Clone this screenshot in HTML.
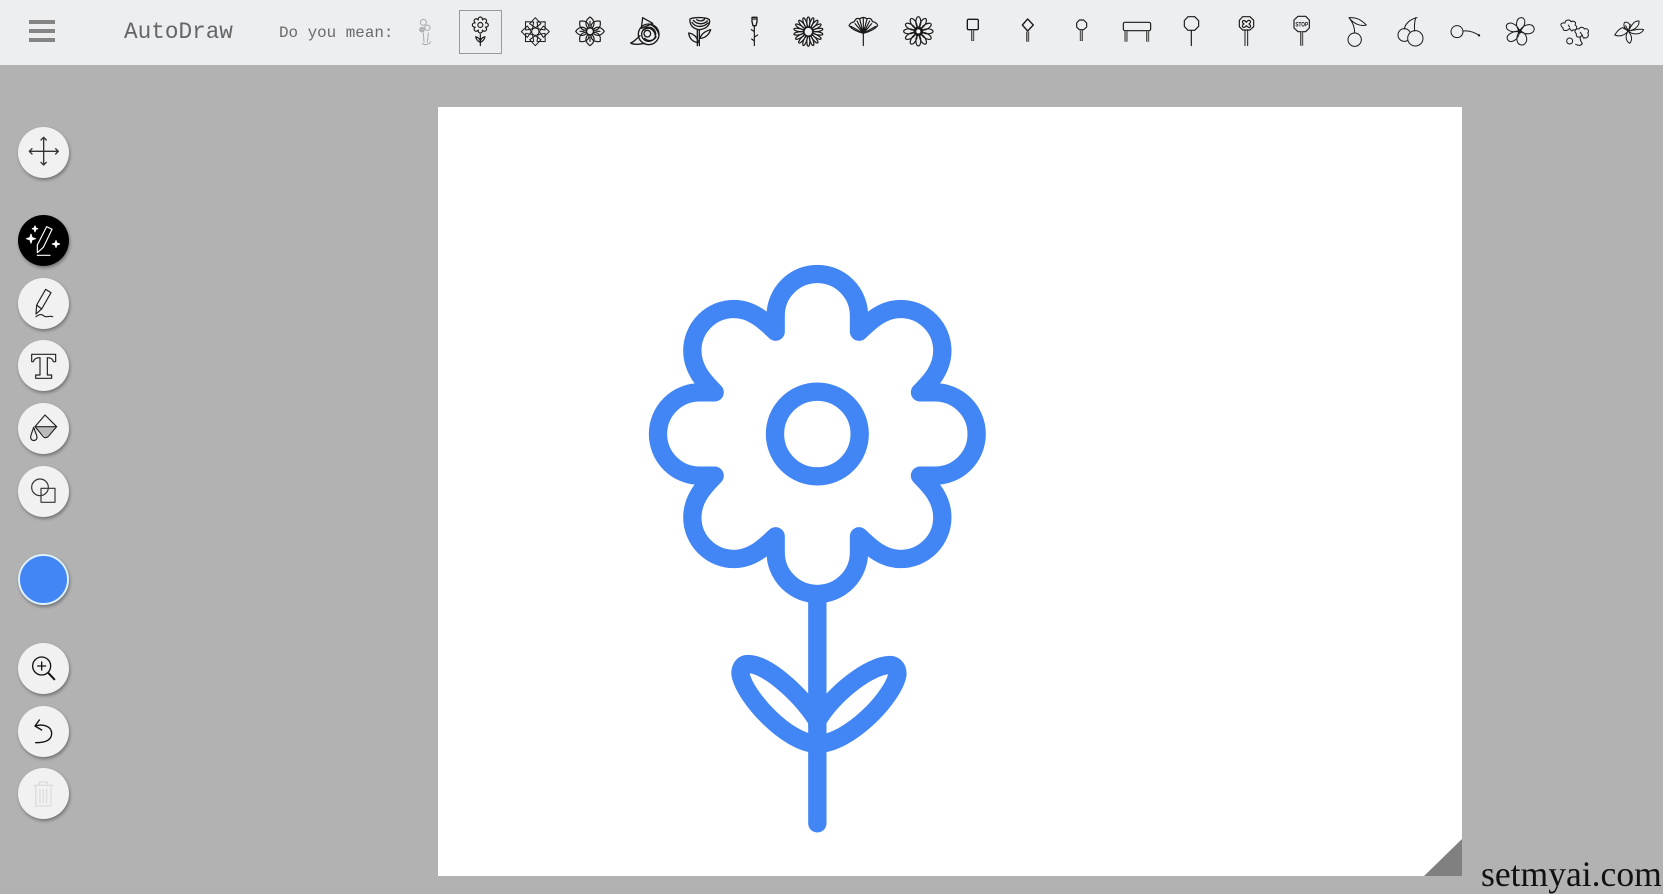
<!DOCTYPE html>
<html lang="en">
<head>
<meta charset="utf-8">
<title>AutoDraw</title>
<style>
html,body{margin:0;padding:0;width:1663px;height:893px;overflow:hidden;background:#b2b2b2}
#bar{position:absolute;left:0;top:0;width:1663px;height:65px;background:#edeef0}
.t{position:absolute;font-family:"Liberation Mono",monospace;color:#666;white-space:pre}
#brand{left:124px;top:19px;font-size:22.7px;line-height:26px}
#ask{left:279px;top:23px;font-size:15.9px;line-height:20px;color:#6a6a6a}
#ham i{position:absolute;left:29px;width:26px;height:4px;background:#858585}
#sel{position:absolute;left:459px;top:10px;width:41px;height:42px;border:1px solid #9a9a9a}
#page{position:absolute;left:438px;top:107px;width:1024px;height:769px;background:#fff}
.b{position:absolute;left:18px;width:51px;height:51px;border-radius:50%;background:#f1f1f1;box-shadow:1px 2px 3px rgba(0,0,0,.35)}
#wm{position:absolute;left:1481px;top:854px;font-family:"Liberation Serif",serif;font-size:35.6px;line-height:40px;color:#111;white-space:pre}
svg{position:absolute;left:0;top:0}
</style>
</head>
<body>
<div id="bar"></div>
<div id="ham"><i style="top:20px"></i><i style="top:29px"></i><i style="top:38px"></i></div>
<div class="t" id="brand">AutoDraw</div>
<div class="t" id="ask">Do you mean:</div>
<div id="sel"></div>
<div id="page"></div>
<div class="b" style="top:127px"></div>
<div class="b" style="top:215px;background:#000"></div>
<div class="b" style="top:278px"></div>
<div class="b" style="top:340px"></div>
<div class="b" style="top:403px"></div>
<div class="b" style="top:466px"></div>
<div class="b" style="top:554px;box-sizing:border-box;background:#4285f4;border:2px solid #dff0ff"></div>
<div class="b" style="top:643px"></div>
<div class="b" style="top:706px"></div>
<div class="b" style="top:768px"></div>

<svg width="1663" height="893" viewBox="0 0 1663 893" fill="none" stroke-linecap="round" stroke-linejoin="round">
<defs>
<path id="fl" d="M437 245V197A125 125 0 0 1 687 197V245C710 225 750 177 812 177A125 125 0 0 1 937 302C937 365 890 405 870 427H915A125 125 0 0 1 915 677H870C890 699 937 739 937 802A125 125 0 0 1 812 927C750 927 710 879 687 859V907A125 125 0 0 1 437 907V859C414 879 374 927 312 927A125 125 0 0 1 187 802C187 739 234 699 254 677H209A125 125 0 0 1 209 427H254C234 405 187 365 187 302A125 125 0 0 1 312 177C374 177 414 225 437 245Z"/>
<path id="man" d="M0-12L-17-24 0-42 17-24Z"/>
<path id="pet" d="M-7-11C-18-24-10-36 0-43 10-36 18-24 7-11"/>
<ellipse id="ray" cx="0" cy="-29" rx="4.5" ry="15"/>
<ellipse id="dai" cx="0" cy="-28" rx="7.5" ry="16"/>
</defs>

<!-- page corner -->
<polygon points="1424,876 1462,839 1462,876" fill="#808080"/>

<!-- big flower -->
<g transform="translate(630 250) scale(.33333)" stroke="#4285f4" stroke-width="55">
<use href="#fl"/>
<circle cx="562" cy="552" r="127"/>
</g>
<g transform="translate(700 590) scale(.33333)" stroke="#4285f4" stroke-width="55">
<path d="M352 20V700"/>
<path d="M352 392C300 310 200 222 145 222 125 222 120 240 122 255 135 320 260 460 352 462"/>
<path d="M352 392C400 310 510 225 570 225 590 225 593 245 592 255 580 320 450 460 352 462"/>
</g>

<!-- suggestion row 1 -->
<g transform="translate(410 5) scale(.33333)" stroke="#1a1a1a" stroke-width="3.5">
<g stroke="#aaa" stroke-width="3"><circle cx="40" cy="52" r="9"/><circle cx="52" cy="68" r="8"/><circle cx="36" cy="74" r="7" fill="#bbb"/><path d="M40 84L42 112M55 84L52 112M36 116C46 122 58 118 62 110"/></g>
<g transform="translate(211 60) scale(.05) translate(-562 -552)" stroke-width="70"><use href="#fl"/><circle cx="562" cy="552" r="150"/></g>
<path d="M211 88V122M211 112C200 108 198 100 197 95 205 97 211 103 211 112M211 112C222 108 224 100 225 95 217 97 211 103 211 112"/>
<g transform="translate(376 80)" stroke-width="3"><use href="#man"/><use href="#man" transform="rotate(45)"/><use href="#man" transform="rotate(90)"/><use href="#man" transform="rotate(135)"/><use href="#man" transform="rotate(180)"/><use href="#man" transform="rotate(225)"/><use href="#man" transform="rotate(270)"/><use href="#man" transform="rotate(315)"/><circle r="11"/></g>
<g transform="translate(540 79)" stroke-width="3.500"><use href="#pet"/><use href="#pet" transform="rotate(45)"/><use href="#pet" transform="rotate(90)"/><use href="#pet" transform="rotate(135)"/><use href="#pet" transform="rotate(180)"/><use href="#pet" transform="rotate(225)"/><use href="#pet" transform="rotate(270)"/><use href="#pet" transform="rotate(315)"/><circle r="11" stroke-width="5"/><path d="M0-18V-30M18 0H30M0 18V30M-18 0H-30"/></g>
<g stroke-width="4"><circle cx="716" cy="88" r="31"/><circle cx="716" cy="88" r="21"/><circle cx="712" cy="86" r="10"/><path d="M698 38L728 55 694 70ZM690 92C680 102 670 112 662 114 672 120 690 118 704 115M720 58C735 64 745 78 747 90M700 76C716 62 734 74 736 92M704 100C716 112 732 106 738 96"/></g>
<g stroke-width="4"><path d="M840 42C852 36 888 36 898 44 902 58 890 72 868 74 848 72 838 58 840 42ZM850 46C860 58 880 60 892 48M860 44C870 50 880 48 884 42M846 52C856 68 880 68 894 54"/><path d="M868 74V122M862 74V122"/><path d="M865 112C848 112 838 100 836 84 850 86 862 96 865 112ZM870 100C882 100 896 92 902 74 888 78 874 86 870 100Z"/></g>
</g>

<!-- suggestion row 2 -->
<g transform="translate(725 5) scale(.33333)" stroke="#1a1a1a" stroke-width="3.5">
<path d="M81 37H96V50L93 62H84L81 50ZM85 42H92" stroke-width="4"/><path d="M88 62V122M88 80L79 74M88 96L98 90M88 108L80 102"/>
<g transform="translate(250 80)" stroke-width="3.5"><use href="#ray"/><use href="#ray" transform="rotate(20)"/><use href="#ray" transform="rotate(40)"/><use href="#ray" transform="rotate(60)"/><use href="#ray" transform="rotate(80)"/><use href="#ray" transform="rotate(100)"/><use href="#ray" transform="rotate(120)"/><use href="#ray" transform="rotate(140)"/><use href="#ray" transform="rotate(160)"/><use href="#ray" transform="rotate(180)"/><use href="#ray" transform="rotate(200)"/><use href="#ray" transform="rotate(220)"/><use href="#ray" transform="rotate(240)"/><use href="#ray" transform="rotate(260)"/><use href="#ray" transform="rotate(280)"/><use href="#ray" transform="rotate(300)"/><use href="#ray" transform="rotate(320)"/><use href="#ray" transform="rotate(340)"/><circle r="13" fill="#edeef0"/></g>
<g stroke-width="3.5"><path d="M415 85C395 80 380 72 372 62 376 52 384 52 388 50 392 40 398 38 404 42 410 36 420 36 426 42 432 38 440 40 442 50 448 50 456 54 458 62 450 72 435 80 415 85Z"/><path d="M415 122V85M415 85L390 56M415 85L396 48M415 85L404 42M415 85L415 40M415 85L426 42M415 85L434 48M415 85L440 56M415 85L378 64M415 85L452 64"/></g>
<g transform="translate(580 79)" stroke-width="3.5"><use href="#dai"/><use href="#dai" transform="rotate(30)"/><use href="#dai" transform="rotate(60)"/><use href="#dai" transform="rotate(90)"/><use href="#dai" transform="rotate(120)"/><use href="#dai" transform="rotate(150)"/><use href="#dai" transform="rotate(180)"/><use href="#dai" transform="rotate(210)"/><use href="#dai" transform="rotate(240)"/><use href="#dai" transform="rotate(270)"/><use href="#dai" transform="rotate(300)"/><use href="#dai" transform="rotate(330)"/><circle r="13" fill="#1a1a1a"/><circle r="6" fill="#fff" stroke="none"/></g>
<rect x="727" y="43" width="33" height="31" rx="4" stroke-width="4"/><path d="M743 75V108" stroke="#333" stroke-width="9" stroke-linecap="butt"/><path d="M743 75V107" stroke="#aaa" stroke-width="4" stroke-linecap="butt"/>
<path d="M908 42L925 60 908 78 892 60Z" stroke-width="4"/><path d="M908 80V110" stroke="#333" stroke-width="9" stroke-linecap="butt"/><path d="M908 80V109" stroke="#999" stroke-width="4" stroke-linecap="butt"/>
</g>

<!-- suggestion row 3 -->
<g transform="translate(1040 5) scale(.33333)" stroke="#1a1a1a" stroke-width="3.500">
<path d="M118 45H131L140 54V66L131 74H118L110 66V54Z"/><path d="M124 76V108" stroke="#333" stroke-width="9" stroke-linecap="butt"/><path d="M124 76V107" stroke="#aaa" stroke-width="4" stroke-linecap="butt"/>
<rect x="250" y="52" width="82" height="25" rx="5"/><path d="M258 78V110M323 78V110" stroke="#333" stroke-width="9" stroke-linecap="butt"/><path d="M258 78V109M323 78V109" stroke="#aaa" stroke-width="4" stroke-linecap="butt"/>
<path d="M444 35H464L476 47V64L464 76H444L433 64V47Z"/><path d="M454 76V122"/>
<path d="M608 35H630L641 46V65L630 75H608L598 65V46Z"/><path d="M609 47C614 45 617 49 619 52 622 48 625 44 630 47 634 51 630 54 627 57 631 60 634 63 630 67 626 69 622 65 619 62 616 66 612 69 608 66 605 62 608 59 612 57 608 54 605 51 609 47Z"/><path d="M615 76V122M623 76V122" stroke-width="3"/>
<path d="M774 34H797L808 45V69L797 80H774L762 69V45Z"/><text x="785" y="64" text-anchor="middle" font-family="Liberation Sans,sans-serif" font-size="18" font-weight="700" fill="#1a1a1a" stroke="none" textLength="38" lengthAdjust="spacingAndGlyphs">STOP</text><path d="M785 80V122" stroke="#333" stroke-width="9" stroke-linecap="butt"/><path d="M785 80V121" stroke="#aaa" stroke-width="4" stroke-linecap="butt"/>
</g>

<!-- suggestion row 4 -->
<g transform="translate(1343 5) scale(.33333)" stroke="#1a1a1a" stroke-width="3">
<circle cx="35" cy="104" r="20"/><path d="M35 84C35 66 28 50 18 38 40 36 55 45 70 60 55 64 35 60 18 38"/>
<circle cx="184" cy="90" r="19"/><circle cx="217" cy="100" r="23" fill="#edeef0"/><path d="M184 72C186 58 198 44 222 38M215 78C213 62 215 50 218 38"/>
<circle cx="342" cy="80" r="18"/><path d="M360 78C378 76 395 82 410 92"/><circle cx="408" cy="91" r="2" fill="#1a1a1a"/>
<path d="M530 78C516 66 518 40 534 38 550 38 550 62 530 78ZM530 78C540 58 566 52 573 68 578 88 548 92 530 78ZM530 78C554 84 558 112 540 120 520 122 516 98 530 78ZM530 78C530 100 505 120 494 104 486 90 510 78 530 78ZM530 78C510 84 488 78 490 62 496 46 522 56 530 78Z"/><circle cx="530" cy="79" r="5" fill="#1a1a1a"/>
<path d="M680 70C672 80 658 78 660 68 650 62 652 52 666 54 666 44 680 42 684 50 692 46 702 52 696 60 706 66 700 78 690 74 688 80 684 78 680 70Z"/><path d="M718 90C710 100 698 98 700 86 692 80 696 70 708 72 712 64 722 66 724 72 734 68 740 78 734 84 740 92 732 102 724 98 722 102 720 98 718 90Z"/><circle cx="680" cy="108" r="9"/><path d="M698 118C706 122 714 122 718 116 714 110 710 104 712 96M680 66L676 60M716 88L712 82"/>
<path d="M855 78C845 66 835 60 815 90 830 96 845 92 855 78ZM855 78C838 66 840 48 852 52 862 56 866 68 855 78ZM855 78C866 62 872 46 888 48 890 62 876 76 855 78ZM855 78C875 76 890 70 902 74 895 88 872 92 855 78ZM855 78C866 90 870 104 860 115 848 108 846 92 855 78Z"/><path d="M848 62L856 78M862 58L856 78M842 70L856 78"/>
</g>

<!-- side icons -->
<g transform="translate(0 110) scale(.33333)">
<g stroke="#333" stroke-width="4"><path d="M88 124H175M131 82V165M96 116L88 124 96 132M167 116L175 124 167 132M123 90L131 82 139 90M123 157L131 165 139 157"/></g>
<g stroke="#fff" stroke-width="3.5"><path d="M112 428V405L140 350 156 358 130 412ZM112 436H150"/><path d="M93 373L96 383 106 386 96 389 93 399 90 389 80 386 90 383Z" fill="#fff"/><path d="M105 348L107 354 113 356 107 358 105 365 103 358 97 356 103 354Z" fill="#fff"/><path d="M168 392L170 399 179 402 170 405 168 412 166 405 157 402 166 399Z" fill="#fff"/></g>
<g stroke="#222" stroke-width="3.5"><path d="M108 612L110 585 137 538 153 548 125 597ZM110 585L125 597"/><path d="M108 620C118 612 126 612 132 618 140 624 148 616 158 620"/></g>
<path d="M95 733H167V755H160C158 745 150 743 142 743V795H155V805H107V795H120V743C110 743 102 745 100 755H95Z" stroke="#222" stroke-width="3.5"/>
</g>
<g transform="translate(0 380) scale(.33333)">
<g stroke="#222" stroke-width="3.5"><path d="M105 140H170L138 172Z" fill="#bbb" stroke="none"/><path d="M135 105L170 140 146 168C140 174 134 174 130 170L105 140Z"/><path d="M105 140H170"/><path d="M101 142C96 158 92 165 92 172A9.500 9.500 0 0 0 111 172C111 165 106 158 101 142Z"/></g>
<g stroke="#333" stroke-width="3.5"><circle cx="120" cy="322" r="25"/><rect x="123" y="325" width="42" height="42"/></g>
<g stroke="#111" stroke-width="4"><circle cx="125" cy="858" r="27"/><path d="M113 858H137M125 846V870"/><path d="M146 880L163 898" stroke-width="6"/></g>
<path d="M118 1020L105 1038 125 1050M105 1038C130 1030 155 1040 155 1060 155 1080 135 1088 107 1088" stroke="#111" stroke-width="4"/>
<g stroke="#ddd" stroke-width="4"><path d="M102 1216H158M118 1216V1206H142V1216M107 1216V1278H153V1216M120 1228V1268M130 1228V1268M140 1228V1268"/></g>
</g>
</svg>
<div id="wm">setmyai.com</div>
</body>
</html>
